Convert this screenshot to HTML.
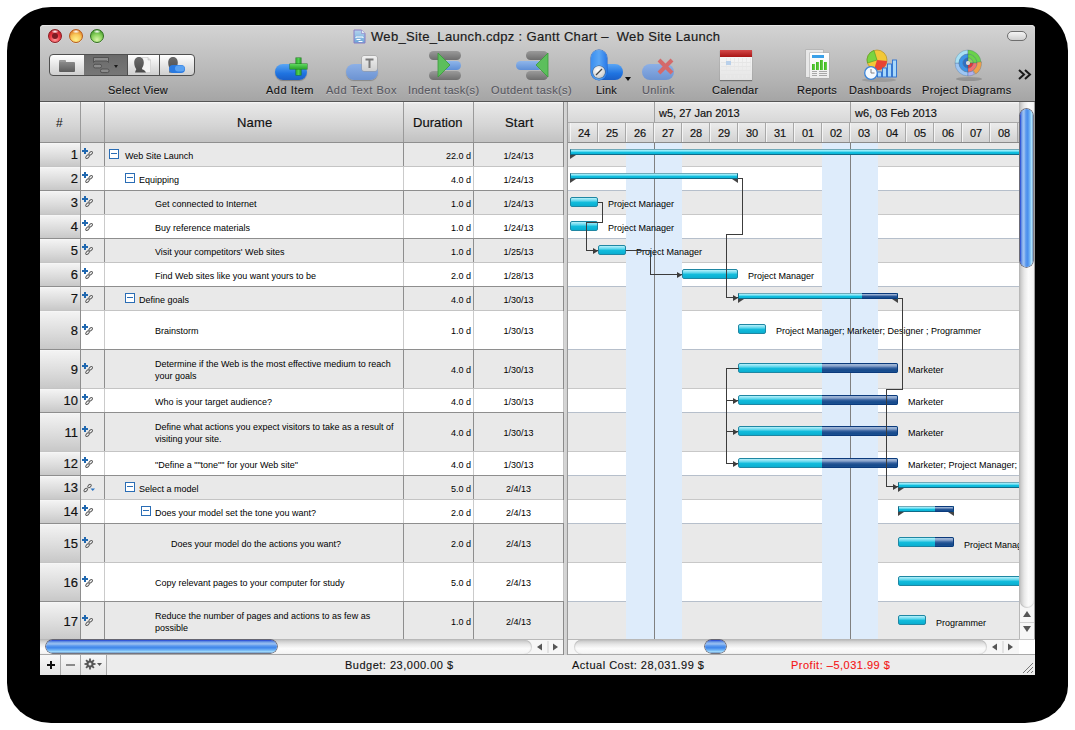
<!DOCTYPE html><html><head><meta charset="utf-8"><style>
*{box-sizing:border-box}
body{margin:0;width:1075px;height:730px;background:#fff;position:relative;overflow:hidden;font-family:"Liberation Sans",sans-serif;color:#000}
.a{position:absolute}
.t{position:absolute;white-space:pre;line-height:1}
.ui{font-size:11px;letter-spacing:0.5px;-webkit-text-stroke:0.12px}
.lg{-webkit-text-stroke:0.18px}
.tb{font-size:11px;color:#111;-webkit-text-stroke:0.1px;text-shadow:0 1px 0 rgba(255,255,255,0.35)}
.dis{color:#56565e}
.cell{font-size:9px;color:#000}
.hdr{background:linear-gradient(#f8f8f8 0px,#e8e8e8 2px,#d4d4d4 60%,#c2c2c2 100%);}
.rnum{background:linear-gradient(#f3f3f3,#dadada 60%,#c8c8c8)}
.bar{position:absolute;border:1px solid #1f87a3;border-radius:2px;background:linear-gradient(#b8f1fb 0%,#5fd6ec 35%,#12bcdc 55%,#0aaed0 100%)}
.dk{position:absolute;top:-1px;bottom:-1px;right:-1px;border:1px solid #0b3a7c;border-left:none;border-radius:0 2px 2px 0;background:linear-gradient(#a4bad8 0%,#8aa4cc 25%,#34609e 50%,#164a8c 75%,#1a4f90 100%)}
.sbar{position:absolute;border:1px solid #0f6a88;border-top-color:#6fa9b9;background:linear-gradient(#a4f0fc,#7fe4f6 30%,#10c0e0 55%,#0cb4d6)}
.ln{position:absolute;background:#3c3c3c}
.lbl{position:absolute;white-space:pre;font-size:9px;line-height:1;color:#000}
</style></head><body>
<div class="a" style="left:7px;top:7px;width:1061px;height:716px;background:#000;border-radius:44px 44px 43px 44px / 44px 44px 37px 40px"></div>
<div class="a" style="left:40px;top:25px;width:995px;height:650px;background:#ececec;border-radius:4px 4px 0 0;overflow:hidden">
</div>
<div class="a" style="left:40px;top:25px;width:995px;height:77px;border-radius:4px 4px 0 0;background:linear-gradient(#d3d3d3 0%,#c6c6c6 30%,#b2b2b2 75%,#a5a5a5 100%);border-top:1px solid #e6e6e6;border-bottom:1px solid #555"></div>
<div class="a" style="left:48px;top:29px;width:14px;height:14px;border-radius:50%;background:radial-gradient(circle 11.5px at 50% 80%,#ff9a9a 0%,#ec3a44 45%,#c0202a 80%,#8a1a20 100%);border:0.6px solid #8a1a20;box-shadow:0 0.5px 0.5px rgba(255,255,255,0.5)"></div>
<div class="a" style="left:52px;top:30px;width:6px;height:3px;border-radius:50%;background:radial-gradient(rgba(255,255,255,0.95),rgba(255,255,255,0))"></div>
<div class="a" style="left:52px;top:33px;width:6px;height:6px;border-radius:50%;background:#7e1c24"></div>
<div class="a" style="left:69px;top:29px;width:14px;height:14px;border-radius:50%;background:radial-gradient(circle 11.5px at 50% 80%,#fff08a 0%,#f8c85a 45%,#e0802a 80%,#b85a18 100%);border:0.6px solid #b85a18;box-shadow:0 0.5px 0.5px rgba(255,255,255,0.5)"></div>
<div class="a" style="left:73px;top:30px;width:6px;height:3px;border-radius:50%;background:radial-gradient(rgba(255,255,255,0.95),rgba(255,255,255,0))"></div>
<div class="a" style="left:90px;top:29px;width:14px;height:14px;border-radius:50%;background:radial-gradient(circle 11.5px at 50% 80%,#d8f6a8 0%,#8cd35e 45%,#4a9e30 80%,#2f6e1e 100%);border:0.6px solid #2f6e1e;box-shadow:0 0.5px 0.5px rgba(255,255,255,0.5)"></div>
<div class="a" style="left:94px;top:30px;width:6px;height:3px;border-radius:50%;background:radial-gradient(rgba(255,255,255,0.95),rgba(255,255,255,0))"></div>
<div class="a" style="left:1007px;top:31px;width:20px;height:10px;border-radius:5px;border:1px solid #6e6e6e;background:linear-gradient(#f4f4f4,#cfcfcf)"></div>
<svg class="a" style="left:352.5px;top:28.5px" width="13" height="15"><defs><linearGradient id="ti" x1="0" y1="0" x2="0" y2="1"><stop offset="0" stop-color="#b4d4ee"/><stop offset="1" stop-color="#6aa6d8"/></linearGradient></defs><path d="M1,1 L8.5,1 L12,4.5 L12,14 L1,14Z" fill="url(#ti)" stroke="#8a7cc4" stroke-width="1"/><path d="M8.5,1 L8.5,4.5 L12,4.5" fill="#e4eef6" stroke="#8a7cc4" stroke-width="0.6"/><path d="M3,9 L3,8 L10,8 L10,9" fill="none" stroke="#fff" stroke-width="1"/><rect x="3.5" y="10" width="4" height="1" fill="#fff"/><rect x="5.5" y="12" width="4" height="1" fill="#fff"/></svg>
<div class="t lg" style="left:371px;top:30px;font-size:13px;letter-spacing:0.33px;color:#1a1a1a">Web_Site_Launch.cdpz : Gantt Chart –  Web Site Launch</div>
<div class="a" style="left:49px;top:54px;width:146px;height:22px;border:1px solid #4f4f4f;border-radius:4px;background:linear-gradient(#ffffff,#e6e6e6 50%,#cfcfcf);overflow:hidden">
<div class="a" style="left:34px;top:0;width:43px;height:20px;background:linear-gradient(#6a6a6a,#777)"></div>
<div class="a" style="left:77px;top:0;width:1px;height:20px;background:#4f4f4f"></div>
<div class="a" style="left:109px;top:0;width:1px;height:20px;background:#4f4f4f"></div>
</div>
<div class="a" style="left:59px;top:60px;width:7px;height:3px;background:#9a9a9a;border-radius:1px 1px 0 0"></div>
<div class="a" style="left:59px;top:62px;width:16px;height:10px;background:linear-gradient(#8a8a8a,#5c5c5c);border-radius:1px"></div>
<svg class="a" style="left:92px;top:56px" width="20" height="18"><g fill="#8c8c8c" stroke="#4e4e4e" stroke-width="0.9"><path d="M1.5,1.5 H16.5 V6.5 L15,5 H3 L1.5,6.5 Z"/><rect x="1.5" y="8.3" width="8" height="3.6" rx="1.6"/><rect x="8.5" y="13" width="8.5" height="3.6" rx="1.6"/></g></svg>
<div class="a" style="left:114px;top:65px;width:0;height:0;border-left:2.5px solid transparent;border-right:2.5px solid transparent;border-top:3px solid #1a1a1a"></div>
<svg class="a" style="left:134px;top:57px" width="18" height="16"><defs><linearGradient id="bg1" x1="0" y1="0" x2="0" y2="1"><stop offset="0" stop-color="#6a6a6a"/><stop offset="1" stop-color="#4a4a4a"/></linearGradient></defs><path d="M8,0.5 L14,0.5 L16.5,3 L16.5,15.5 L8,15.5Z" fill="#f4f4f4" stroke="#c8c8c8" stroke-width="0.6"/><path d="M14,0.5 L14,3 L16.5,3" fill="#ddd" stroke="#bbb" stroke-width="0.5"/><path d="M5,0 C8.3,0 9.8,2.6 9.8,5.6 C9.8,8.2 9,10 8,11 L8,12.2 C10,12.8 11.5,14 12,15.5 L1,15.5 C1.3,14 1.8,13 2.3,12.2 C1,10.8 0.2,8.4 0.2,5.6 C0.2,2.6 1.7,0 5,0Z" fill="url(#bg1)"/></svg>
<svg class="a" style="left:168px;top:57px" width="18" height="17"><defs><linearGradient id="bg1" x1="0" y1="0" x2="0" y2="1"><stop offset="0" stop-color="#6a6a6a"/><stop offset="1" stop-color="#4a4a4a"/></linearGradient></defs><path d="M5,0 C8.3,0 9.8,2.6 9.8,5.6 C9.8,8.2 9,10 8,11 L8,12.2 C10,12.8 11.5,14 12,15.5 L1,15.5 C1.3,14 1.8,13 2.3,12.2 C1,10.8 0.2,8.4 0.2,5.6 C0.2,2.6 1.7,0 5,0Z" fill="url(#bg1)"/><rect x="1" y="8" width="16" height="8" rx="4" fill="#2a7ae0"/><rect x="7" y="8.5" width="9.5" height="6" rx="3" fill="#5aa2f2"/></svg>
<div class="t tb" style="left:108px;top:85px;letter-spacing:0.25px">Select View</div>
<div class="a" style="left:275px;top:64px;width:32px;height:16px;border-radius:8px;background:linear-gradient(#5aa6f5,#1f73e0 60%,#1a5fc8);box-shadow:0 1px 1px rgba(0,0,0,0.3)"></div>
<div class="a" style="left:296px;top:58px;width:5px;height:17px;background:linear-gradient(90deg,#2fa82f,#4fd04f,#2a9a2a);box-shadow:0 0 0 0.5px #1d7a1d"></div>
<div class="a" style="left:290px;top:64px;width:17px;height:5px;background:linear-gradient(#5fd85f,#2aa52a);box-shadow:0 0 0 0.5px #1d7a1d"></div>
<div class="t tb" style="left:266px;top:85px;letter-spacing:0.5px">Add Item</div>
<div class="a" style="left:346px;top:64px;width:32px;height:16px;border-radius:8px;background:linear-gradient(#8db0e6,#6c93d2);box-shadow:0 1px 1px rgba(0,0,0,0.25)"></div>
<div class="a" style="left:362px;top:56px;width:15px;height:15px;border-radius:2px;background:linear-gradient(#f0f0f0,#cfcfcf);box-shadow:0 0 0 0.5px #999"></div>
<svg class="a" style="left:362px;top:56px" width="15" height="15"><path d="M3.5,3.5 H11.5 M7.5,3.5 V12" stroke="#7a7a7a" stroke-width="2"/></svg>
<div class="t tb dis" style="left:326px;top:85px;letter-spacing:0.53px">Add Text Box</div>
<div class="a" style="left:429px;top:51px;width:32px;height:9px;border-radius:5px;background:linear-gradient(#9a9a9a,#6e6e6e)"></div>
<div class="a" style="left:429px;top:71px;width:32px;height:9px;border-radius:5px;background:linear-gradient(#9a9a9a,#6e6e6e)"></div>
<div class="a" style="left:440px;top:61px;width:21px;height:9px;border-radius:5px;background:linear-gradient(#8fb6ea,#5f8fd6)"></div>
<svg class="a" style="left:436px;top:52px" width="16" height="26"><polygon points="2,1 14,13 2,25" fill="#5cbf5c" stroke="#3a9a3a" stroke-width="0.8"/></svg>
<div class="t tb dis" style="left:408px;top:85px;letter-spacing:0.34px">Indent task(s)</div>
<div class="a" style="left:526px;top:51px;width:22px;height:9px;border-radius:5px;background:linear-gradient(#9a9a9a,#6e6e6e)"></div>
<div class="a" style="left:526px;top:71px;width:22px;height:9px;border-radius:5px;background:linear-gradient(#9a9a9a,#6e6e6e)"></div>
<div class="a" style="left:516px;top:61px;width:26px;height:9px;border-radius:5px;background:linear-gradient(#8fb6ea,#5f8fd6)"></div>
<svg class="a" style="left:534px;top:52px" width="16" height="26"><polygon points="14,1 2,13 14,25" fill="#5cbf5c" stroke="#3a9a3a" stroke-width="0.8"/></svg>
<div class="t tb dis" style="left:491px;top:85px;letter-spacing:0.39px">Outdent task(s)</div>
<div class="a" style="left:591px;top:64px;width:32px;height:16px;border-radius:8px;background:linear-gradient(#5aa6f5,#1f73e0 60%,#1a5fc8)"></div>
<div class="a" style="left:591px;top:50px;width:16px;height:30px;border-radius:8px;background:linear-gradient(90deg,#3a8ef0,#5aa6f5 50%,#2a7ae8);box-shadow:0 0 0 0.5px #1a5fc8"></div>
<div class="a" style="left:593px;top:66px;width:12px;height:12px;border-radius:50%;background:radial-gradient(circle at 40% 35%,#fff,#cfcfcf 70%,#888);box-shadow:0 0 0 0.5px #555"></div>
<svg class="a" style="left:593px;top:66px" width="12" height="12"><line x1="3" y1="9" x2="9" y2="3" stroke="#444" stroke-width="1.2"/></svg>
<div class="a" style="left:625px;top:77px;width:0;height:0;border-left:3px solid transparent;border-right:3px solid transparent;border-top:4px solid #111"></div>
<div class="t tb" style="left:596px;top:85px;letter-spacing:0.2px">Link</div>
<div class="a" style="left:642px;top:64px;width:32px;height:16px;border-radius:8px;background:linear-gradient(#8db0e6,#6c93d2)"></div>
<svg class="a" style="left:657px;top:58px" width="17" height="17"><path d="M2,2 L15,15 M15,2 L2,15" stroke="#d46a6a" stroke-width="4"/></svg>
<div class="t tb dis" style="left:642px;top:85px;letter-spacing:0.4px">Unlink</div>
<div class="a" style="left:720px;top:50px;width:32px;height:30px;background:linear-gradient(#fafafa,#e4e4e4);box-shadow:0 1px 1px rgba(0,0,0,0.35)"></div>
<div class="a" style="left:720px;top:50px;width:32px;height:7px;background:linear-gradient(#d44a4a,#a81414)"></div>
<div class="a" style="left:726px;top:58px;width:1px;height:21px;background:#e9e9e9"></div><div class="a" style="left:730px;top:58px;width:1px;height:21px;background:#e9e9e9"></div><div class="a" style="left:734px;top:58px;width:1px;height:21px;background:#e9e9e9"></div><div class="a" style="left:738px;top:58px;width:1px;height:21px;background:#e9e9e9"></div><div class="a" style="left:742px;top:58px;width:1px;height:21px;background:#e9e9e9"></div><div class="a" style="left:746px;top:58px;width:1px;height:21px;background:#e9e9e9"></div><div class="a" style="left:750px;top:58px;width:1px;height:21px;background:#e9e9e9"></div>
<div class="a" style="left:721px;top:62px;width:30px;height:1px;background:#e6e6e6"></div><div class="a" style="left:721px;top:66px;width:30px;height:1px;background:#e6e6e6"></div><div class="a" style="left:721px;top:70px;width:30px;height:1px;background:#e6e6e6"></div><div class="a" style="left:721px;top:74px;width:30px;height:1px;background:#e6e6e6"></div><div class="a" style="left:721px;top:78px;width:30px;height:1px;background:#e6e6e6"></div>
<div class="a" style="left:726px;top:61px;width:5px;height:4px;background:#b9d0ea"></div>
<div class="t tb" style="left:712px;top:85px;letter-spacing:0.2px">Calendar</div>
<div class="a" style="left:806px;top:50px;width:17px;height:27px;background:#e8e8e8;box-shadow:0 0 0 0.5px #aaa"></div>
<div class="a" style="left:810px;top:53px;width:19px;height:25px;background:linear-gradient(#fff,#ececec);box-shadow:0 0 0 0.5px #aaa"></div>
<div class="a" style="left:812px;top:55px;width:12px;height:3px;background:#3aa0e8"></div>
<div class="a" style="left:812px;top:64px;width:3px;height:6px;background:linear-gradient(90deg,#3cb01c,#6ad84a)"></div>
<div class="a" style="left:816px;top:62px;width:3px;height:8px;background:linear-gradient(90deg,#3cb01c,#6ad84a)"></div>
<div class="a" style="left:820px;top:60px;width:3px;height:10px;background:linear-gradient(90deg,#3cb01c,#6ad84a)"></div>
<div class="a" style="left:824px;top:62px;width:3px;height:8px;background:linear-gradient(90deg,#3cb01c,#6ad84a)"></div>
<div class="a" style="left:812px;top:71px;width:5px;height:1px;background:#a8a8a8"></div>
<div class="a" style="left:819px;top:71px;width:8px;height:1px;background:#a8a8a8"></div>
<div class="a" style="left:812px;top:73px;width:5px;height:1px;background:#a8a8a8"></div>
<div class="a" style="left:819px;top:73px;width:8px;height:1px;background:#a8a8a8"></div>
<div class="a" style="left:812px;top:75px;width:5px;height:1px;background:#a8a8a8"></div>
<div class="a" style="left:819px;top:75px;width:8px;height:1px;background:#a8a8a8"></div>
<div class="t tb" style="left:797px;top:85px;letter-spacing:0.2px">Reports</div>
<div class="a" style="left:862px;top:78px;width:34px;height:4px;border-radius:50%;background:rgba(0,0,0,0.13)"></div>
<svg class="a" style="left:860px;top:49px" width="40" height="32"><g transform="translate(17,11)"><circle r="10" fill="#f2c838" stroke="#b89020" stroke-width="0.7"/><path d="M0,0 L-9.5,3 A10,10 0 0 1 -3,-9.5 Z" fill="#7ad440" stroke="#4a9a2a" stroke-width="0.6"/><path d="M0,0 L10,1 A10,10 0 0 1 -3,9.6 Z" fill="#e84434"/></g><rect x="17.5" y="23" width="4" height="5" fill="#a8d8fa" stroke="#2a70d0" stroke-width="0.9"/><rect x="22.5" y="19" width="4" height="9" fill="#a8d8fa" stroke="#2a70d0" stroke-width="0.9"/><rect x="27.5" y="15" width="4" height="13" fill="#a8d8fa" stroke="#2a70d0" stroke-width="0.9"/><rect x="32.5" y="11" width="4" height="17" fill="#a8d8fa" stroke="#2a70d0" stroke-width="0.9"/><circle cx="11" cy="24" r="6.3" fill="#f4faff" stroke="#3a84d8" stroke-width="1.3"/><path d="M11,20 L11,24 L14.5,24" stroke="#777" fill="none" stroke-width="0.9"/></svg>
<div class="t tb" style="left:849px;top:85px;letter-spacing:0.32px">Dashboards</div>
<div class="a" style="left:956px;top:77px;width:26px;height:4px;border-radius:50%;background:rgba(0,0,0,0.18)"></div>
<svg class="a" style="left:953px;top:49px" width="32" height="30"><g transform="translate(15,14)"><path d="M0.00,13.00 A13,13 0 0 1 -13.00,0.00 L-9.00,0.00 A9,9 0 0 0 0.00,9.00Z" fill="#9ec6f4" stroke="rgba(60,90,120,0.55)" stroke-width="0.5"/><path d="M-13.00,0.00 A13,13 0 0 1 -0.00,-13.00 L-0.00,-9.00 A9,9 0 0 0 -9.00,0.00Z" fill="#a8e0f4" stroke="rgba(60,90,120,0.55)" stroke-width="0.5"/><path d="M6.50,11.26 A13,13 0 0 1 0.00,13.00 L0.00,9.00 A9,9 0 0 0 4.50,7.79Z" fill="#b0b0f0" stroke="rgba(60,90,120,0.55)" stroke-width="0.5"/><path d="M0.00,9.00 A9,9 0 0 1 -0.00,-9.00 L-0.00,-5.00 A5,5 0 0 0 0.00,5.00Z" fill="#3c94e8" stroke="rgba(60,90,120,0.55)" stroke-width="0.5"/><path d="M0.00,5.00 A5,5 0 0 1 -0.00,-5.00 L-0.00,-2.00 A2,2 0 0 0 0.00,2.00Z" fill="#2f6fc4" stroke="rgba(60,90,120,0.55)" stroke-width="0.5"/><path d="M-0.00,-9.00 A9,9 0 0 1 9.00,-0.00 L5.00,-0.00 A5,5 0 0 0 -0.00,-5.00Z" fill="#6ad24a" stroke="rgba(60,90,120,0.55)" stroke-width="0.5"/><path d="M-0.00,-13.00 A13,13 0 0 1 13.00,-0.00 L9.00,-0.00 A9,9 0 0 0 -0.00,-9.00Z" fill="#6ad24a" stroke="rgba(60,90,120,0.55)" stroke-width="0.5"/><path d="M9.00,0.00 A9,9 0 0 1 0.00,9.00 L0.00,5.00 A5,5 0 0 0 5.00,0.00Z" fill="#f07070" stroke="rgba(60,90,120,0.55)" stroke-width="0.5"/><path d="M-0.00,-5.00 A5,5 0 0 1 5.00,-0.00 L2.00,-0.00 A2,2 0 0 0 -0.00,-2.00Z" fill="#8ad060" stroke="rgba(60,90,120,0.55)" stroke-width="0.5"/><path d="M5.00,0.00 A5,5 0 0 1 0.00,5.00 L0.00,2.00 A2,2 0 0 0 2.00,0.00Z" fill="#e03838" stroke="rgba(60,90,120,0.55)" stroke-width="0.5"/><path d="M13.45,-1.18 A13.5,13.5 0 0 1 7.74,11.06 L5.16,7.37 A9,9 0 0 0 8.97,-0.78Z" fill="#f0a048" stroke="rgba(60,90,120,0.55)" stroke-width="0.5"/><circle r="2" fill="#d8d8d8"/></g></svg>
<div class="t tb" style="left:922px;top:85px;letter-spacing:0.32px">Project Diagrams</div>
<svg class="a" style="left:1018px;top:69px" width="14" height="11"><path d="M1,1 L6,5.5 L1,10 M7,1 L12,5.5 L7,10" fill="none" stroke="#1a1a1a" stroke-width="2"/></svg>
<div class="a hdr" style="left:40px;top:102px;width:523px;height:41px;border-bottom:1px solid #8a8a8a"></div>
<div class="a" style="left:80px;top:102px;width:1px;height:41px;background:#9a9a9a"></div>
<div class="a" style="left:104px;top:102px;width:1px;height:41px;background:#9a9a9a"></div>
<div class="a" style="left:403px;top:102px;width:1px;height:41px;background:#9a9a9a"></div>
<div class="a" style="left:473px;top:102px;width:1px;height:41px;background:#9a9a9a"></div>
<div class="t" style="left:56px;top:117px;font-size:12px;color:#111">#</div>
<div class="t lg" style="left:237px;top:116px;font-size:13px;letter-spacing:0.2px;color:#111">Name</div>
<div class="t lg" style="left:413px;top:116px;font-size:13px;letter-spacing:0.05px;color:#111">Duration</div>
<div class="t lg" style="left:505px;top:116px;font-size:13px;letter-spacing:0.2px;color:#111">Start</div>
<div class="a" style="left:81px;top:143px;width:482px;height:23px;background:#e9e9e9"></div>
<div class="a rnum" style="left:40px;top:143px;width:40px;height:23px;border-top:1px solid #f6f6f6"></div>
<div class="a" style="left:81px;top:167px;width:482px;height:23px;background:#ffffff"></div>
<div class="a rnum" style="left:40px;top:167px;width:40px;height:23px;border-top:1px solid #f6f6f6"></div>
<div class="a" style="left:81px;top:191px;width:482px;height:23px;background:#e9e9e9"></div>
<div class="a rnum" style="left:40px;top:191px;width:40px;height:23px;border-top:1px solid #f6f6f6"></div>
<div class="a" style="left:81px;top:215px;width:482px;height:23px;background:#ffffff"></div>
<div class="a rnum" style="left:40px;top:215px;width:40px;height:23px;border-top:1px solid #f6f6f6"></div>
<div class="a" style="left:81px;top:239px;width:482px;height:23px;background:#e9e9e9"></div>
<div class="a rnum" style="left:40px;top:239px;width:40px;height:23px;border-top:1px solid #f6f6f6"></div>
<div class="a" style="left:81px;top:263px;width:482px;height:23px;background:#ffffff"></div>
<div class="a rnum" style="left:40px;top:263px;width:40px;height:23px;border-top:1px solid #f6f6f6"></div>
<div class="a" style="left:81px;top:287px;width:482px;height:23px;background:#e9e9e9"></div>
<div class="a rnum" style="left:40px;top:287px;width:40px;height:23px;border-top:1px solid #f6f6f6"></div>
<div class="a" style="left:81px;top:311px;width:482px;height:38px;background:#ffffff"></div>
<div class="a rnum" style="left:40px;top:311px;width:40px;height:38px;border-top:1px solid #f6f6f6"></div>
<div class="a" style="left:81px;top:350px;width:482px;height:38px;background:#e9e9e9"></div>
<div class="a rnum" style="left:40px;top:350px;width:40px;height:38px;border-top:1px solid #f6f6f6"></div>
<div class="a" style="left:81px;top:389px;width:482px;height:23px;background:#ffffff"></div>
<div class="a rnum" style="left:40px;top:389px;width:40px;height:23px;border-top:1px solid #f6f6f6"></div>
<div class="a" style="left:81px;top:413px;width:482px;height:38px;background:#e9e9e9"></div>
<div class="a rnum" style="left:40px;top:413px;width:40px;height:38px;border-top:1px solid #f6f6f6"></div>
<div class="a" style="left:81px;top:452px;width:482px;height:23px;background:#ffffff"></div>
<div class="a rnum" style="left:40px;top:452px;width:40px;height:23px;border-top:1px solid #f6f6f6"></div>
<div class="a" style="left:81px;top:476px;width:482px;height:23px;background:#e9e9e9"></div>
<div class="a rnum" style="left:40px;top:476px;width:40px;height:23px;border-top:1px solid #f6f6f6"></div>
<div class="a" style="left:81px;top:500px;width:482px;height:23px;background:#ffffff"></div>
<div class="a rnum" style="left:40px;top:500px;width:40px;height:23px;border-top:1px solid #f6f6f6"></div>
<div class="a" style="left:81px;top:524px;width:482px;height:38px;background:#e9e9e9"></div>
<div class="a rnum" style="left:40px;top:524px;width:40px;height:38px;border-top:1px solid #f6f6f6"></div>
<div class="a" style="left:81px;top:563px;width:482px;height:38px;background:#ffffff"></div>
<div class="a rnum" style="left:40px;top:563px;width:40px;height:38px;border-top:1px solid #f6f6f6"></div>
<div class="a" style="left:81px;top:602px;width:482px;height:38px;background:#e9e9e9"></div>
<div class="a rnum" style="left:40px;top:602px;width:40px;height:38px;border-top:1px solid #f6f6f6"></div>
<div class="a" style="left:40px;top:166px;width:523px;height:1px;background:#c4c4c4"></div>
<div class="a" style="left:40px;top:190px;width:523px;height:1px;background:#8e8e8e"></div>
<div class="a" style="left:40px;top:214px;width:523px;height:1px;background:#c4c4c4"></div>
<div class="a" style="left:40px;top:238px;width:523px;height:1px;background:#8e8e8e"></div>
<div class="a" style="left:40px;top:262px;width:523px;height:1px;background:#c4c4c4"></div>
<div class="a" style="left:40px;top:286px;width:523px;height:1px;background:#8e8e8e"></div>
<div class="a" style="left:40px;top:310px;width:523px;height:1px;background:#c4c4c4"></div>
<div class="a" style="left:40px;top:349px;width:523px;height:1px;background:#8e8e8e"></div>
<div class="a" style="left:40px;top:388px;width:523px;height:1px;background:#c4c4c4"></div>
<div class="a" style="left:40px;top:412px;width:523px;height:1px;background:#8e8e8e"></div>
<div class="a" style="left:40px;top:451px;width:523px;height:1px;background:#c4c4c4"></div>
<div class="a" style="left:40px;top:475px;width:523px;height:1px;background:#8e8e8e"></div>
<div class="a" style="left:40px;top:499px;width:523px;height:1px;background:#c4c4c4"></div>
<div class="a" style="left:40px;top:523px;width:523px;height:1px;background:#8e8e8e"></div>
<div class="a" style="left:40px;top:562px;width:523px;height:1px;background:#c4c4c4"></div>
<div class="a" style="left:40px;top:601px;width:523px;height:1px;background:#8e8e8e"></div>
<div class="a" style="left:40px;top:640px;width:523px;height:1px;background:#c4c4c4"></div>
<div class="a" style="left:40px;top:142px;width:523px;height:1px;background:#8f8f8f"></div>
<div class="a" style="left:80px;top:143px;width:1px;height:496px;background:#8e8e8e"></div>
<div class="a" style="left:104px;top:143px;width:1px;height:23px;background:#8e8e8e"></div>
<div class="a" style="left:403px;top:143px;width:1px;height:23px;background:#8e8e8e"></div>
<div class="a" style="left:473px;top:143px;width:1px;height:23px;background:#8e8e8e"></div>
<div class="a" style="left:104px;top:167px;width:1px;height:23px;background:#cbcbcb"></div>
<div class="a" style="left:403px;top:167px;width:1px;height:23px;background:#cbcbcb"></div>
<div class="a" style="left:473px;top:167px;width:1px;height:23px;background:#cbcbcb"></div>
<div class="a" style="left:104px;top:191px;width:1px;height:23px;background:#8e8e8e"></div>
<div class="a" style="left:403px;top:191px;width:1px;height:23px;background:#8e8e8e"></div>
<div class="a" style="left:473px;top:191px;width:1px;height:23px;background:#8e8e8e"></div>
<div class="a" style="left:104px;top:215px;width:1px;height:23px;background:#cbcbcb"></div>
<div class="a" style="left:403px;top:215px;width:1px;height:23px;background:#cbcbcb"></div>
<div class="a" style="left:473px;top:215px;width:1px;height:23px;background:#cbcbcb"></div>
<div class="a" style="left:104px;top:239px;width:1px;height:23px;background:#8e8e8e"></div>
<div class="a" style="left:403px;top:239px;width:1px;height:23px;background:#8e8e8e"></div>
<div class="a" style="left:473px;top:239px;width:1px;height:23px;background:#8e8e8e"></div>
<div class="a" style="left:104px;top:263px;width:1px;height:23px;background:#cbcbcb"></div>
<div class="a" style="left:403px;top:263px;width:1px;height:23px;background:#cbcbcb"></div>
<div class="a" style="left:473px;top:263px;width:1px;height:23px;background:#cbcbcb"></div>
<div class="a" style="left:104px;top:287px;width:1px;height:23px;background:#8e8e8e"></div>
<div class="a" style="left:403px;top:287px;width:1px;height:23px;background:#8e8e8e"></div>
<div class="a" style="left:473px;top:287px;width:1px;height:23px;background:#8e8e8e"></div>
<div class="a" style="left:104px;top:311px;width:1px;height:38px;background:#cbcbcb"></div>
<div class="a" style="left:403px;top:311px;width:1px;height:38px;background:#cbcbcb"></div>
<div class="a" style="left:473px;top:311px;width:1px;height:38px;background:#cbcbcb"></div>
<div class="a" style="left:104px;top:350px;width:1px;height:38px;background:#8e8e8e"></div>
<div class="a" style="left:403px;top:350px;width:1px;height:38px;background:#8e8e8e"></div>
<div class="a" style="left:473px;top:350px;width:1px;height:38px;background:#8e8e8e"></div>
<div class="a" style="left:104px;top:389px;width:1px;height:23px;background:#cbcbcb"></div>
<div class="a" style="left:403px;top:389px;width:1px;height:23px;background:#cbcbcb"></div>
<div class="a" style="left:473px;top:389px;width:1px;height:23px;background:#cbcbcb"></div>
<div class="a" style="left:104px;top:413px;width:1px;height:38px;background:#8e8e8e"></div>
<div class="a" style="left:403px;top:413px;width:1px;height:38px;background:#8e8e8e"></div>
<div class="a" style="left:473px;top:413px;width:1px;height:38px;background:#8e8e8e"></div>
<div class="a" style="left:104px;top:452px;width:1px;height:23px;background:#cbcbcb"></div>
<div class="a" style="left:403px;top:452px;width:1px;height:23px;background:#cbcbcb"></div>
<div class="a" style="left:473px;top:452px;width:1px;height:23px;background:#cbcbcb"></div>
<div class="a" style="left:104px;top:476px;width:1px;height:23px;background:#8e8e8e"></div>
<div class="a" style="left:403px;top:476px;width:1px;height:23px;background:#8e8e8e"></div>
<div class="a" style="left:473px;top:476px;width:1px;height:23px;background:#8e8e8e"></div>
<div class="a" style="left:104px;top:500px;width:1px;height:23px;background:#cbcbcb"></div>
<div class="a" style="left:403px;top:500px;width:1px;height:23px;background:#cbcbcb"></div>
<div class="a" style="left:473px;top:500px;width:1px;height:23px;background:#cbcbcb"></div>
<div class="a" style="left:104px;top:524px;width:1px;height:38px;background:#8e8e8e"></div>
<div class="a" style="left:403px;top:524px;width:1px;height:38px;background:#8e8e8e"></div>
<div class="a" style="left:473px;top:524px;width:1px;height:38px;background:#8e8e8e"></div>
<div class="a" style="left:104px;top:563px;width:1px;height:38px;background:#cbcbcb"></div>
<div class="a" style="left:403px;top:563px;width:1px;height:38px;background:#cbcbcb"></div>
<div class="a" style="left:473px;top:563px;width:1px;height:38px;background:#cbcbcb"></div>
<div class="a" style="left:104px;top:602px;width:1px;height:38px;background:#8e8e8e"></div>
<div class="a" style="left:403px;top:602px;width:1px;height:38px;background:#8e8e8e"></div>
<div class="a" style="left:473px;top:602px;width:1px;height:38px;background:#8e8e8e"></div>
<div class="t lg" style="left:40px;width:38px;text-align:right;top:148px;font-size:13px;color:#111">1</div>
<svg class="a" style="left:82px;top:147px" width="16" height="14"><path d="M3,1 V7 M0,4 H6" stroke="#2068b0" stroke-width="2"/><g fill="#f4f4f4" stroke="#5c5c5c" stroke-width="1"><ellipse cx="8.7" cy="6.3" rx="2.2" ry="1.3" transform="rotate(-45 8.7 6.3)"/><ellipse cx="5.5" cy="9.7" rx="2.2" ry="1.3" transform="rotate(-45 5.5 9.7)"/></g></svg>
<div class="a" style="left:109px;top:149px;width:10px;height:10px;border:1px solid #2a6db5;background:#fff"></div>
<div class="a" style="left:111px;top:153px;width:6px;height:1px;background:#2a6db5"></div>
<div class="t cell" style="left:125px;top:150px;line-height:12px">Web Site Launch</div>
<div class="t cell" style="left:404px;width:67px;text-align:right;top:152px">22.0 d</div>
<div class="t cell" style="left:474px;width:89px;text-align:center;top:152px">1/24/13</div>
<div class="t lg" style="left:40px;width:38px;text-align:right;top:172px;font-size:13px;color:#111">2</div>
<svg class="a" style="left:82px;top:171px" width="16" height="14"><path d="M3,1 V7 M0,4 H6" stroke="#2068b0" stroke-width="2"/><g fill="#f4f4f4" stroke="#5c5c5c" stroke-width="1"><ellipse cx="8.7" cy="6.3" rx="2.2" ry="1.3" transform="rotate(-45 8.7 6.3)"/><ellipse cx="5.5" cy="9.7" rx="2.2" ry="1.3" transform="rotate(-45 5.5 9.7)"/></g></svg>
<div class="a" style="left:125px;top:173px;width:10px;height:10px;border:1px solid #2a6db5;background:#fff"></div>
<div class="a" style="left:127px;top:177px;width:6px;height:1px;background:#2a6db5"></div>
<div class="t cell" style="left:139px;top:174px;line-height:12px">Equipping</div>
<div class="t cell" style="left:404px;width:67px;text-align:right;top:176px">4.0 d</div>
<div class="t cell" style="left:474px;width:89px;text-align:center;top:176px">1/24/13</div>
<div class="t lg" style="left:40px;width:38px;text-align:right;top:196px;font-size:13px;color:#111">3</div>
<svg class="a" style="left:82px;top:195px" width="16" height="14"><path d="M3,1 V7 M0,4 H6" stroke="#2068b0" stroke-width="2"/><g fill="#f4f4f4" stroke="#5c5c5c" stroke-width="1"><ellipse cx="8.7" cy="6.3" rx="2.2" ry="1.3" transform="rotate(-45 8.7 6.3)"/><ellipse cx="5.5" cy="9.7" rx="2.2" ry="1.3" transform="rotate(-45 5.5 9.7)"/></g></svg>
<div class="t cell" style="left:155px;top:198px;line-height:12px">Get connected to Internet</div>
<div class="t cell" style="left:404px;width:67px;text-align:right;top:200px">1.0 d</div>
<div class="t cell" style="left:474px;width:89px;text-align:center;top:200px">1/24/13</div>
<div class="t lg" style="left:40px;width:38px;text-align:right;top:220px;font-size:13px;color:#111">4</div>
<svg class="a" style="left:82px;top:219px" width="16" height="14"><path d="M3,1 V7 M0,4 H6" stroke="#2068b0" stroke-width="2"/><g fill="#f4f4f4" stroke="#5c5c5c" stroke-width="1"><ellipse cx="8.7" cy="6.3" rx="2.2" ry="1.3" transform="rotate(-45 8.7 6.3)"/><ellipse cx="5.5" cy="9.7" rx="2.2" ry="1.3" transform="rotate(-45 5.5 9.7)"/></g></svg>
<div class="t cell" style="left:155px;top:222px;line-height:12px">Buy reference materials</div>
<div class="t cell" style="left:404px;width:67px;text-align:right;top:224px">1.0 d</div>
<div class="t cell" style="left:474px;width:89px;text-align:center;top:224px">1/24/13</div>
<div class="t lg" style="left:40px;width:38px;text-align:right;top:244px;font-size:13px;color:#111">5</div>
<svg class="a" style="left:82px;top:243px" width="16" height="14"><path d="M3,1 V7 M0,4 H6" stroke="#2068b0" stroke-width="2"/><g fill="#f4f4f4" stroke="#5c5c5c" stroke-width="1"><ellipse cx="8.7" cy="6.3" rx="2.2" ry="1.3" transform="rotate(-45 8.7 6.3)"/><ellipse cx="5.5" cy="9.7" rx="2.2" ry="1.3" transform="rotate(-45 5.5 9.7)"/></g></svg>
<div class="t cell" style="left:155px;top:246px;line-height:12px">Visit your competitors' Web sites</div>
<div class="t cell" style="left:404px;width:67px;text-align:right;top:248px">1.0 d</div>
<div class="t cell" style="left:474px;width:89px;text-align:center;top:248px">1/25/13</div>
<div class="t lg" style="left:40px;width:38px;text-align:right;top:268px;font-size:13px;color:#111">6</div>
<svg class="a" style="left:82px;top:267px" width="16" height="14"><path d="M3,1 V7 M0,4 H6" stroke="#2068b0" stroke-width="2"/><g fill="#f4f4f4" stroke="#5c5c5c" stroke-width="1"><ellipse cx="8.7" cy="6.3" rx="2.2" ry="1.3" transform="rotate(-45 8.7 6.3)"/><ellipse cx="5.5" cy="9.7" rx="2.2" ry="1.3" transform="rotate(-45 5.5 9.7)"/></g></svg>
<div class="t cell" style="left:155px;top:270px;line-height:12px">Find Web sites like you want yours to be</div>
<div class="t cell" style="left:404px;width:67px;text-align:right;top:272px">2.0 d</div>
<div class="t cell" style="left:474px;width:89px;text-align:center;top:272px">1/28/13</div>
<div class="t lg" style="left:40px;width:38px;text-align:right;top:292px;font-size:13px;color:#111">7</div>
<svg class="a" style="left:82px;top:291px" width="16" height="14"><path d="M3,1 V7 M0,4 H6" stroke="#2068b0" stroke-width="2"/><g fill="#f4f4f4" stroke="#5c5c5c" stroke-width="1"><ellipse cx="8.7" cy="6.3" rx="2.2" ry="1.3" transform="rotate(-45 8.7 6.3)"/><ellipse cx="5.5" cy="9.7" rx="2.2" ry="1.3" transform="rotate(-45 5.5 9.7)"/></g></svg>
<div class="a" style="left:125px;top:293px;width:10px;height:10px;border:1px solid #2a6db5;background:#fff"></div>
<div class="a" style="left:127px;top:297px;width:6px;height:1px;background:#2a6db5"></div>
<div class="t cell" style="left:139px;top:294px;line-height:12px">Define goals</div>
<div class="t cell" style="left:404px;width:67px;text-align:right;top:296px">4.0 d</div>
<div class="t cell" style="left:474px;width:89px;text-align:center;top:296px">1/30/13</div>
<div class="t lg" style="left:40px;width:38px;text-align:right;top:324px;font-size:13px;color:#111">8</div>
<svg class="a" style="left:82px;top:323px" width="16" height="14"><path d="M3,1 V7 M0,4 H6" stroke="#2068b0" stroke-width="2"/><g fill="#f4f4f4" stroke="#5c5c5c" stroke-width="1"><ellipse cx="8.7" cy="6.3" rx="2.2" ry="1.3" transform="rotate(-45 8.7 6.3)"/><ellipse cx="5.5" cy="9.7" rx="2.2" ry="1.3" transform="rotate(-45 5.5 9.7)"/></g></svg>
<div class="t cell" style="left:155px;top:325px;line-height:12px">Brainstorm</div>
<div class="t cell" style="left:404px;width:67px;text-align:right;top:327px">1.0 d</div>
<div class="t cell" style="left:474px;width:89px;text-align:center;top:327px">1/30/13</div>
<div class="t lg" style="left:40px;width:38px;text-align:right;top:363px;font-size:13px;color:#111">9</div>
<svg class="a" style="left:82px;top:362px" width="16" height="14"><path d="M3,1 V7 M0,4 H6" stroke="#2068b0" stroke-width="2"/><g fill="#f4f4f4" stroke="#5c5c5c" stroke-width="1"><ellipse cx="8.7" cy="6.3" rx="2.2" ry="1.3" transform="rotate(-45 8.7 6.3)"/><ellipse cx="5.5" cy="9.7" rx="2.2" ry="1.3" transform="rotate(-45 5.5 9.7)"/></g></svg>
<div class="t cell" style="left:155px;top:358px;line-height:12px">Determine if the Web is the most effective medium to reach<br>your goals</div>
<div class="t cell" style="left:404px;width:67px;text-align:right;top:366px">4.0 d</div>
<div class="t cell" style="left:474px;width:89px;text-align:center;top:366px">1/30/13</div>
<div class="t lg" style="left:40px;width:38px;text-align:right;top:394px;font-size:13px;color:#111">10</div>
<svg class="a" style="left:82px;top:393px" width="16" height="14"><path d="M3,1 V7 M0,4 H6" stroke="#2068b0" stroke-width="2"/><g fill="#f4f4f4" stroke="#5c5c5c" stroke-width="1"><ellipse cx="8.7" cy="6.3" rx="2.2" ry="1.3" transform="rotate(-45 8.7 6.3)"/><ellipse cx="5.5" cy="9.7" rx="2.2" ry="1.3" transform="rotate(-45 5.5 9.7)"/></g></svg>
<div class="t cell" style="left:155px;top:396px;line-height:12px">Who is your target audience?</div>
<div class="t cell" style="left:404px;width:67px;text-align:right;top:398px">4.0 d</div>
<div class="t cell" style="left:474px;width:89px;text-align:center;top:398px">1/30/13</div>
<div class="t lg" style="left:40px;width:38px;text-align:right;top:426px;font-size:13px;color:#111">11</div>
<svg class="a" style="left:82px;top:425px" width="16" height="14"><path d="M3,1 V7 M0,4 H6" stroke="#2068b0" stroke-width="2"/><g fill="#f4f4f4" stroke="#5c5c5c" stroke-width="1"><ellipse cx="8.7" cy="6.3" rx="2.2" ry="1.3" transform="rotate(-45 8.7 6.3)"/><ellipse cx="5.5" cy="9.7" rx="2.2" ry="1.3" transform="rotate(-45 5.5 9.7)"/></g></svg>
<div class="t cell" style="left:155px;top:421px;line-height:12px">Define what actions you expect visitors to take as a result of<br>visiting your site.</div>
<div class="t cell" style="left:404px;width:67px;text-align:right;top:429px">4.0 d</div>
<div class="t cell" style="left:474px;width:89px;text-align:center;top:429px">1/30/13</div>
<div class="t lg" style="left:40px;width:38px;text-align:right;top:457px;font-size:13px;color:#111">12</div>
<svg class="a" style="left:82px;top:456px" width="16" height="14"><path d="M3,1 V7 M0,4 H6" stroke="#2068b0" stroke-width="2"/><g fill="#f4f4f4" stroke="#5c5c5c" stroke-width="1"><ellipse cx="8.7" cy="6.3" rx="2.2" ry="1.3" transform="rotate(-45 8.7 6.3)"/><ellipse cx="5.5" cy="9.7" rx="2.2" ry="1.3" transform="rotate(-45 5.5 9.7)"/></g></svg>
<div class="t cell" style="left:155px;top:459px;line-height:12px">"Define a ""tone"" for your Web site"</div>
<div class="t cell" style="left:404px;width:67px;text-align:right;top:461px">4.0 d</div>
<div class="t cell" style="left:474px;width:89px;text-align:center;top:461px">1/30/13</div>
<div class="t lg" style="left:40px;width:38px;text-align:right;top:481px;font-size:13px;color:#111">13</div>
<svg class="a" style="left:82px;top:480px" width="16" height="14"><g fill="#f4f4f4" stroke="#5c5c5c" stroke-width="1"><ellipse cx="7.5" cy="6" rx="2.1" ry="1.3" transform="rotate(-45 7.5 6)"/><ellipse cx="3.7" cy="10" rx="2.1" ry="1.3" transform="rotate(-45 3.7 10)"/></g><polygon points="8.5,8.5 13,8.5 10.75,11" fill="#2a72c0"/></svg>
<div class="a" style="left:125px;top:482px;width:10px;height:10px;border:1px solid #2a6db5;background:#fff"></div>
<div class="a" style="left:127px;top:486px;width:6px;height:1px;background:#2a6db5"></div>
<div class="t cell" style="left:139px;top:483px;line-height:12px">Select a model</div>
<div class="t cell" style="left:404px;width:67px;text-align:right;top:485px">5.0 d</div>
<div class="t cell" style="left:474px;width:89px;text-align:center;top:485px">2/4/13</div>
<div class="t lg" style="left:40px;width:38px;text-align:right;top:505px;font-size:13px;color:#111">14</div>
<svg class="a" style="left:82px;top:504px" width="16" height="14"><path d="M3,1 V7 M0,4 H6" stroke="#2068b0" stroke-width="2"/><g fill="#f4f4f4" stroke="#5c5c5c" stroke-width="1"><ellipse cx="8.7" cy="6.3" rx="2.2" ry="1.3" transform="rotate(-45 8.7 6.3)"/><ellipse cx="5.5" cy="9.7" rx="2.2" ry="1.3" transform="rotate(-45 5.5 9.7)"/></g></svg>
<div class="a" style="left:141px;top:506px;width:10px;height:10px;border:1px solid #2a6db5;background:#fff"></div>
<div class="a" style="left:143px;top:510px;width:6px;height:1px;background:#2a6db5"></div>
<div class="t cell" style="left:155px;top:507px;line-height:12px">Does your model set the tone you want?</div>
<div class="t cell" style="left:404px;width:67px;text-align:right;top:509px">2.0 d</div>
<div class="t cell" style="left:474px;width:89px;text-align:center;top:509px">2/4/13</div>
<div class="t lg" style="left:40px;width:38px;text-align:right;top:537px;font-size:13px;color:#111">15</div>
<svg class="a" style="left:82px;top:536px" width="16" height="14"><path d="M3,1 V7 M0,4 H6" stroke="#2068b0" stroke-width="2"/><g fill="#f4f4f4" stroke="#5c5c5c" stroke-width="1"><ellipse cx="8.7" cy="6.3" rx="2.2" ry="1.3" transform="rotate(-45 8.7 6.3)"/><ellipse cx="5.5" cy="9.7" rx="2.2" ry="1.3" transform="rotate(-45 5.5 9.7)"/></g></svg>
<div class="t cell" style="left:171px;top:538px;line-height:12px">Does your model do the actions you want?</div>
<div class="t cell" style="left:404px;width:67px;text-align:right;top:540px">2.0 d</div>
<div class="t cell" style="left:474px;width:89px;text-align:center;top:540px">2/4/13</div>
<div class="t lg" style="left:40px;width:38px;text-align:right;top:576px;font-size:13px;color:#111">16</div>
<svg class="a" style="left:82px;top:575px" width="16" height="14"><path d="M3,1 V7 M0,4 H6" stroke="#2068b0" stroke-width="2"/><g fill="#f4f4f4" stroke="#5c5c5c" stroke-width="1"><ellipse cx="8.7" cy="6.3" rx="2.2" ry="1.3" transform="rotate(-45 8.7 6.3)"/><ellipse cx="5.5" cy="9.7" rx="2.2" ry="1.3" transform="rotate(-45 5.5 9.7)"/></g></svg>
<div class="t cell" style="left:155px;top:577px;line-height:12px">Copy relevant pages to your computer for study</div>
<div class="t cell" style="left:404px;width:67px;text-align:right;top:579px">5.0 d</div>
<div class="t cell" style="left:474px;width:89px;text-align:center;top:579px">2/4/13</div>
<div class="t lg" style="left:40px;width:38px;text-align:right;top:615px;font-size:13px;color:#111">17</div>
<svg class="a" style="left:82px;top:614px" width="16" height="14"><path d="M3,1 V7 M0,4 H6" stroke="#2068b0" stroke-width="2"/><g fill="#f4f4f4" stroke="#5c5c5c" stroke-width="1"><ellipse cx="8.7" cy="6.3" rx="2.2" ry="1.3" transform="rotate(-45 8.7 6.3)"/><ellipse cx="5.5" cy="9.7" rx="2.2" ry="1.3" transform="rotate(-45 5.5 9.7)"/></g></svg>
<div class="t cell" style="left:155px;top:610px;line-height:12px">Reduce the number of pages and actions to as few as<br>possible</div>
<div class="t cell" style="left:404px;width:67px;text-align:right;top:618px">1.0 d</div>
<div class="t cell" style="left:474px;width:89px;text-align:center;top:618px">2/4/13</div>
<div class="a" style="left:563px;top:102px;width:5px;height:553px;background:linear-gradient(90deg,#8a8a8a 0,#8a8a8a 1px,#d8d8d8 1px,#cfcfcf 4px,#9a9a9a 4px)"></div>
<div class="a" style="left:563px;top:167px;width:1px;height:23px;background:#c4c4c4"></div>
<div class="a" style="left:563px;top:215px;width:1px;height:23px;background:#c4c4c4"></div>
<div class="a" style="left:563px;top:263px;width:1px;height:23px;background:#c4c4c4"></div>
<div class="a" style="left:563px;top:311px;width:1px;height:38px;background:#c4c4c4"></div>
<div class="a" style="left:563px;top:389px;width:1px;height:23px;background:#c4c4c4"></div>
<div class="a" style="left:563px;top:452px;width:1px;height:23px;background:#c4c4c4"></div>
<div class="a" style="left:563px;top:500px;width:1px;height:23px;background:#c4c4c4"></div>
<div class="a" style="left:563px;top:563px;width:1px;height:38px;background:#c4c4c4"></div>
<div class="a hdr" style="left:568px;top:102px;width:451px;height:41px;border-bottom:1px solid #8a8a8a"></div>
<div class="a" style="left:568px;top:122px;width:451px;height:1px;background:#a8a8a8"></div>
<div class="a" style="left:654px;top:102px;width:1px;height:20px;background:#a0a0a0"></div>
<div class="a" style="left:850px;top:102px;width:1px;height:20px;background:#a0a0a0"></div>
<div class="t lg" style="left:659px;top:108px;font-size:11px;color:#111">w5, 27 Jan 2013</div>
<div class="t lg" style="left:855px;top:108px;font-size:11px;color:#111">w6, 03 Feb 2013</div>
<div class="a" style="left:570px;top:123px;width:28px;height:19px;border-left:1px solid #f4f4f4;border-right:1px solid #a8a8a8;background:linear-gradient(#ececec,#d2d2d2)"></div>
<div class="t lg" style="left:570px;width:28px;text-align:center;top:128px;font-size:11px;color:#111">24</div>
<div class="a" style="left:598px;top:123px;width:28px;height:19px;border-left:1px solid #f4f4f4;border-right:1px solid #a8a8a8;background:linear-gradient(#ececec,#d2d2d2)"></div>
<div class="t lg" style="left:598px;width:28px;text-align:center;top:128px;font-size:11px;color:#111">25</div>
<div class="a" style="left:626px;top:123px;width:28px;height:19px;border-left:1px solid #f4f4f4;border-right:1px solid #a8a8a8;background:linear-gradient(#ececec,#d2d2d2)"></div>
<div class="t lg" style="left:626px;width:28px;text-align:center;top:128px;font-size:11px;color:#111">26</div>
<div class="a" style="left:654px;top:123px;width:28px;height:19px;border-left:1px solid #f4f4f4;border-right:1px solid #a8a8a8;background:linear-gradient(#ececec,#d2d2d2)"></div>
<div class="t lg" style="left:654px;width:28px;text-align:center;top:128px;font-size:11px;color:#111">27</div>
<div class="a" style="left:682px;top:123px;width:28px;height:19px;border-left:1px solid #f4f4f4;border-right:1px solid #a8a8a8;background:linear-gradient(#ececec,#d2d2d2)"></div>
<div class="t lg" style="left:682px;width:28px;text-align:center;top:128px;font-size:11px;color:#111">28</div>
<div class="a" style="left:710px;top:123px;width:28px;height:19px;border-left:1px solid #f4f4f4;border-right:1px solid #a8a8a8;background:linear-gradient(#ececec,#d2d2d2)"></div>
<div class="t lg" style="left:710px;width:28px;text-align:center;top:128px;font-size:11px;color:#111">29</div>
<div class="a" style="left:738px;top:123px;width:28px;height:19px;border-left:1px solid #f4f4f4;border-right:1px solid #a8a8a8;background:linear-gradient(#ececec,#d2d2d2)"></div>
<div class="t lg" style="left:738px;width:28px;text-align:center;top:128px;font-size:11px;color:#111">30</div>
<div class="a" style="left:766px;top:123px;width:28px;height:19px;border-left:1px solid #f4f4f4;border-right:1px solid #a8a8a8;background:linear-gradient(#ececec,#d2d2d2)"></div>
<div class="t lg" style="left:766px;width:28px;text-align:center;top:128px;font-size:11px;color:#111">31</div>
<div class="a" style="left:794px;top:123px;width:28px;height:19px;border-left:1px solid #f4f4f4;border-right:1px solid #a8a8a8;background:linear-gradient(#ececec,#d2d2d2)"></div>
<div class="t lg" style="left:794px;width:28px;text-align:center;top:128px;font-size:11px;color:#111">01</div>
<div class="a" style="left:822px;top:123px;width:28px;height:19px;border-left:1px solid #f4f4f4;border-right:1px solid #a8a8a8;background:linear-gradient(#ececec,#d2d2d2)"></div>
<div class="t lg" style="left:822px;width:28px;text-align:center;top:128px;font-size:11px;color:#111">02</div>
<div class="a" style="left:850px;top:123px;width:28px;height:19px;border-left:1px solid #f4f4f4;border-right:1px solid #a8a8a8;background:linear-gradient(#ececec,#d2d2d2)"></div>
<div class="t lg" style="left:850px;width:28px;text-align:center;top:128px;font-size:11px;color:#111">03</div>
<div class="a" style="left:878px;top:123px;width:28px;height:19px;border-left:1px solid #f4f4f4;border-right:1px solid #a8a8a8;background:linear-gradient(#ececec,#d2d2d2)"></div>
<div class="t lg" style="left:878px;width:28px;text-align:center;top:128px;font-size:11px;color:#111">04</div>
<div class="a" style="left:906px;top:123px;width:28px;height:19px;border-left:1px solid #f4f4f4;border-right:1px solid #a8a8a8;background:linear-gradient(#ececec,#d2d2d2)"></div>
<div class="t lg" style="left:906px;width:28px;text-align:center;top:128px;font-size:11px;color:#111">05</div>
<div class="a" style="left:934px;top:123px;width:28px;height:19px;border-left:1px solid #f4f4f4;border-right:1px solid #a8a8a8;background:linear-gradient(#ececec,#d2d2d2)"></div>
<div class="t lg" style="left:934px;width:28px;text-align:center;top:128px;font-size:11px;color:#111">06</div>
<div class="a" style="left:962px;top:123px;width:28px;height:19px;border-left:1px solid #f4f4f4;border-right:1px solid #a8a8a8;background:linear-gradient(#ececec,#d2d2d2)"></div>
<div class="t lg" style="left:962px;width:28px;text-align:center;top:128px;font-size:11px;color:#111">07</div>
<div class="a" style="left:990px;top:123px;width:28px;height:19px;border-left:1px solid #f4f4f4;border-right:1px solid #a8a8a8;background:linear-gradient(#ececec,#d2d2d2)"></div>
<div class="t lg" style="left:990px;width:28px;text-align:center;top:128px;font-size:11px;color:#111">08</div>
<div class="a" style="left:568px;top:143px;width:451px;height:23px;background:#e9e9e9"></div>
<div class="a" style="left:568px;top:166px;width:451px;height:1px;background:#c8c8c8"></div>
<div class="a" style="left:568px;top:167px;width:451px;height:23px;background:#ffffff"></div>
<div class="a" style="left:568px;top:190px;width:451px;height:1px;background:#b6bfcb"></div>
<div class="a" style="left:568px;top:191px;width:451px;height:23px;background:#e9e9e9"></div>
<div class="a" style="left:568px;top:214px;width:451px;height:1px;background:#c8c8c8"></div>
<div class="a" style="left:568px;top:215px;width:451px;height:23px;background:#ffffff"></div>
<div class="a" style="left:568px;top:238px;width:451px;height:1px;background:#b6bfcb"></div>
<div class="a" style="left:568px;top:239px;width:451px;height:23px;background:#e9e9e9"></div>
<div class="a" style="left:568px;top:262px;width:451px;height:1px;background:#c8c8c8"></div>
<div class="a" style="left:568px;top:263px;width:451px;height:23px;background:#ffffff"></div>
<div class="a" style="left:568px;top:286px;width:451px;height:1px;background:#b6bfcb"></div>
<div class="a" style="left:568px;top:287px;width:451px;height:23px;background:#e9e9e9"></div>
<div class="a" style="left:568px;top:310px;width:451px;height:1px;background:#c8c8c8"></div>
<div class="a" style="left:568px;top:311px;width:451px;height:38px;background:#ffffff"></div>
<div class="a" style="left:568px;top:349px;width:451px;height:1px;background:#b6bfcb"></div>
<div class="a" style="left:568px;top:350px;width:451px;height:38px;background:#e9e9e9"></div>
<div class="a" style="left:568px;top:388px;width:451px;height:1px;background:#c8c8c8"></div>
<div class="a" style="left:568px;top:389px;width:451px;height:23px;background:#ffffff"></div>
<div class="a" style="left:568px;top:412px;width:451px;height:1px;background:#b6bfcb"></div>
<div class="a" style="left:568px;top:413px;width:451px;height:38px;background:#e9e9e9"></div>
<div class="a" style="left:568px;top:451px;width:451px;height:1px;background:#c8c8c8"></div>
<div class="a" style="left:568px;top:452px;width:451px;height:23px;background:#ffffff"></div>
<div class="a" style="left:568px;top:475px;width:451px;height:1px;background:#b6bfcb"></div>
<div class="a" style="left:568px;top:476px;width:451px;height:23px;background:#e9e9e9"></div>
<div class="a" style="left:568px;top:499px;width:451px;height:1px;background:#c8c8c8"></div>
<div class="a" style="left:568px;top:500px;width:451px;height:23px;background:#ffffff"></div>
<div class="a" style="left:568px;top:523px;width:451px;height:1px;background:#b6bfcb"></div>
<div class="a" style="left:568px;top:524px;width:451px;height:38px;background:#e9e9e9"></div>
<div class="a" style="left:568px;top:562px;width:451px;height:1px;background:#c8c8c8"></div>
<div class="a" style="left:568px;top:563px;width:451px;height:38px;background:#ffffff"></div>
<div class="a" style="left:568px;top:601px;width:451px;height:1px;background:#b6bfcb"></div>
<div class="a" style="left:568px;top:602px;width:451px;height:38px;background:#e9e9e9"></div>
<div class="a" style="left:568px;top:640px;width:451px;height:1px;background:#c8c8c8"></div>
<div class="a" style="left:626px;top:143px;width:56px;height:496px;background:#deecfb"></div>
<div class="a" style="left:822px;top:143px;width:56px;height:496px;background:#deecfb"></div>
<div class="a" style="left:654px;top:143px;width:1px;height:496px;background:#808080"></div>
<div class="a" style="left:850px;top:143px;width:1px;height:496px;background:#808080"></div>
<div class="a" style="left:568px;top:143px;width:451px;height:496px;overflow:hidden">
<div class="sbar" style="left:2px;top:6px;width:460px;height:6px"></div><svg class="a" style="left:2px;top:12px" width="6" height="4"><polygon points="0,0 6,0 0,4" fill="#444"/></svg>
<div class="sbar" style="left:2px;top:30px;width:168px;height:6px"></div><svg class="a" style="left:2px;top:36px" width="6" height="4"><polygon points="0,0 6,0 0,4" fill="#444"/></svg><svg class="a" style="left:164px;top:36px" width="6" height="4"><polygon points="0,0 6,0 6,4" fill="#444"/></svg>
<div class="bar" style="left:2px;top:54px;width:28px;height:10px"></div>
<div class="lbl" style="left:40px;top:57px">Project Manager</div>
<div class="bar" style="left:2px;top:78px;width:28px;height:10px"></div>
<div class="lbl" style="left:40px;top:81px">Project Manager</div>
<div class="bar" style="left:30px;top:102px;width:28px;height:10px"></div>
<div class="lbl" style="left:68px;top:105px">Project Manager</div>
<div class="bar" style="left:114px;top:126px;width:56px;height:10px"></div>
<div class="lbl" style="left:180px;top:129px">Project Manager</div>
<div class="sbar" style="left:170px;top:150px;width:160px;height:6px"><div class="dk" style="left:123px"></div></div><svg class="a" style="left:170px;top:156px" width="6" height="4"><polygon points="0,0 6,0 0,4" fill="#444"/></svg><svg class="a" style="left:324px;top:156px" width="6" height="4"><polygon points="0,0 6,0 6,4" fill="#444"/></svg>
<div class="bar" style="left:170px;top:181px;width:28px;height:10px"></div>
<div class="lbl" style="left:208px;top:184px">Project Manager; Marketer; Designer ; Programmer</div>
<div class="bar" style="left:170px;top:220px;width:160px;height:10px"><div class="dk" style="left:83px"></div></div>
<div class="lbl" style="left:340px;top:223px">Marketer</div>
<div class="bar" style="left:170px;top:252px;width:160px;height:10px"><div class="dk" style="left:83px"></div></div>
<div class="lbl" style="left:340px;top:255px">Marketer</div>
<div class="bar" style="left:170px;top:283px;width:160px;height:10px"><div class="dk" style="left:83px"></div></div>
<div class="lbl" style="left:340px;top:286px">Marketer</div>
<div class="bar" style="left:170px;top:315px;width:160px;height:10px"><div class="dk" style="left:83px"></div></div>
<div class="lbl" style="left:340px;top:318px">Marketer; Project Manager; Designer</div>
<div class="sbar" style="left:330px;top:339px;width:132px;height:6px"></div><svg class="a" style="left:330px;top:345px" width="6" height="4"><polygon points="0,0 6,0 0,4" fill="#444"/></svg>
<div class="sbar" style="left:330px;top:363px;width:56px;height:6px"><div class="dk" style="left:36px"></div></div><svg class="a" style="left:330px;top:369px" width="6" height="4"><polygon points="0,0 6,0 0,4" fill="#444"/></svg><svg class="a" style="left:380px;top:369px" width="6" height="4"><polygon points="0,0 6,0 6,4" fill="#444"/></svg>
<div class="bar" style="left:330px;top:394px;width:56px;height:10px"><div class="dk" style="left:36px"></div></div>
<div class="lbl" style="left:396px;top:398px">Project Manager</div>
<div class="bar" style="left:330px;top:433px;width:132px;height:10px"></div>
<div class="bar" style="left:330px;top:472px;width:28px;height:10px"></div>
<div class="lbl" style="left:368px;top:476px">Programmer</div>
<div class="ln" style="left:30px;top:59px;width:5px;height:1px"></div>
<div class="ln" style="left:34px;top:59px;width:1px;height:21px"></div>
<div class="ln" style="left:18px;top:79px;width:17px;height:1px"></div>
<div class="ln" style="left:18px;top:79px;width:1px;height:29px"></div>
<div class="ln" style="left:18px;top:107px;width:12px;height:1px"></div>
<svg class="a" style="left:25px;top:104.5px" width="5" height="6"><polygon points="0,0 5,3 0,6" fill="#3c3c3c"/></svg>
<div class="ln" style="left:58px;top:107px;width:25px;height:1px"></div>
<div class="ln" style="left:82px;top:107px;width:1px;height:25px"></div>
<div class="ln" style="left:82px;top:131px;width:32px;height:1px"></div>
<svg class="a" style="left:109px;top:128.5px" width="5" height="6"><polygon points="0,0 5,3 0,6" fill="#3c3c3c"/></svg>
<div class="ln" style="left:170px;top:35px;width:5px;height:1px"></div>
<div class="ln" style="left:174px;top:35px;width:1px;height:57px"></div>
<div class="ln" style="left:158px;top:91px;width:17px;height:1px"></div>
<div class="ln" style="left:158px;top:91px;width:1px;height:64px"></div>
<div class="ln" style="left:158px;top:154px;width:12px;height:1px"></div>
<svg class="a" style="left:165px;top:151.5px" width="5" height="6"><polygon points="0,0 5,3 0,6" fill="#3c3c3c"/></svg>
<div class="ln" style="left:158px;top:225px;width:13px;height:1px"></div>
<div class="ln" style="left:158px;top:225px;width:1px;height:96px"></div>
<div class="ln" style="left:158px;top:257px;width:12px;height:1px"></div>
<svg class="a" style="left:165px;top:254.5px" width="5" height="6"><polygon points="0,0 5,3 0,6" fill="#3c3c3c"/></svg>
<div class="ln" style="left:158px;top:288px;width:12px;height:1px"></div>
<svg class="a" style="left:165px;top:285.5px" width="5" height="6"><polygon points="0,0 5,3 0,6" fill="#3c3c3c"/></svg>
<div class="ln" style="left:158px;top:320px;width:12px;height:1px"></div>
<svg class="a" style="left:165px;top:317.5px" width="5" height="6"><polygon points="0,0 5,3 0,6" fill="#3c3c3c"/></svg>
<div class="ln" style="left:330px;top:155px;width:5px;height:1px"></div>
<div class="ln" style="left:334px;top:155px;width:1px;height:92px"></div>
<div class="ln" style="left:318px;top:246px;width:17px;height:1px"></div>
<div class="ln" style="left:318px;top:246px;width:1px;height:98px"></div>
<div class="ln" style="left:318px;top:343px;width:12px;height:1px"></div>
<svg class="a" style="left:325px;top:340.5px" width="5" height="6"><polygon points="0,0 5,3 0,6" fill="#3c3c3c"/></svg>
</div>
<div class="a" style="left:1019px;top:102px;width:16px;height:537px;background:#f6f6f6;border-left:1px solid #b8b8b8;border-right:1px solid #a0a0a0"></div>
<div class="a" style="left:1020px;top:102px;width:14px;height:506px;border-radius:0 0 7px 7px;background:linear-gradient(90deg,#c4c4c4 0%,#e8e8e8 30%,#fbfbfb 60%,#f2f2f2 100%);box-shadow:inset 0 -1px 1px rgba(0,0,0,0.15)"></div>
<div class="a" style="left:1020px;top:109px;width:13px;height:158px;border-radius:7px;box-shadow:0 0 0 0.7px #4a4a5a;background:linear-gradient(90deg,#1f3fd0 0%,#7aa6ea 15%,#a4c6f2 30%,#5a98ee 45%,#4a8eec 60%,#7abcf6 78%,#b0e6fd 90%,#6a90c0 100%)"></div>
<div class="a" style="left:1020px;top:622px;width:14px;height:1px;background:#d0d0d0"></div>
<svg class="a" style="left:1022px;top:609px" width="10" height="28"><polygon points="5,2 9,8 1,8" fill="#555"/><polygon points="1,17 9,17 5,23" fill="#555"/></svg>
<div class="a" style="left:40px;top:639px;width:523px;height:16px;background:#f6f6f6;border-top:1px solid #b8b8b8;border-bottom:1px solid #a8a8a8"></div>
<div class="a" style="left:40px;top:640px;width:492px;height:14px;border-radius:0 7px 7px 0;background:linear-gradient(#c4c4c4 0%,#e6e6e6 30%,#fbfbfb 60%,#f4f4f4 100%);box-shadow:inset -1px 0 1px rgba(0,0,0,0.15)"></div>
<div class="a" style="left:46px;top:640px;width:231px;height:13px;border-radius:7px;box-shadow:0 0 0 0.7px #4a4a5a;background:linear-gradient(#1f3fd0 0%,#6f9ee8 15%,#9cc2f2 30%,#5a98ee 45%,#3f86ea 60%,#78baf6 80%,#a8e0fc 92%,#5a80b8 100%)"></div>
<svg class="a" style="left:532px;top:640px" width="31" height="14"><polygon points="5,7 10,3.5 10,10.5" fill="#555"/><line x1="16" y1="1" x2="16" y2="13" stroke="#d0d0d0"/><polygon points="26,7 21,3.5 21,10.5" fill="#555"/></svg>
<div class="a" style="left:568px;top:639px;width:451px;height:16px;background:#f6f6f6;border-top:1px solid #b8b8b8;border-bottom:1px solid #a8a8a8"></div>
<div class="a" style="left:574px;top:640px;width:413px;height:14px;border-radius:7px;background:linear-gradient(#c4c4c4 0%,#e6e6e6 30%,#fbfbfb 60%,#f4f4f4 100%);box-shadow:inset 1px 0 1px rgba(0,0,0,0.15),inset -1px 0 1px rgba(0,0,0,0.15)"></div>
<div class="a" style="left:705px;top:640px;width:21px;height:13px;border-radius:7px;box-shadow:0 0 0 0.7px #4a4a5a;background:linear-gradient(#1f3fd0 0%,#6f9ee8 15%,#9cc2f2 30%,#5a98ee 45%,#3f86ea 60%,#78baf6 80%,#a8e0fc 92%,#5a80b8 100%)"></div>
<svg class="a" style="left:987px;top:640px" width="31" height="14"><polygon points="5,7 10,3.5 10,10.5" fill="#555"/><line x1="16" y1="1" x2="16" y2="13" stroke="#d0d0d0"/><polygon points="26,7 21,3.5 21,10.5" fill="#555"/></svg>
<div class="a" style="left:1019px;top:639px;width:16px;height:16px;background:#fff;border-top:1px solid #c8c8c8;border-bottom:1px solid #a8a8a8"></div>
<div class="a" style="left:40px;top:655px;width:995px;height:20px;background:#ececec"></div>
<div class="a" style="left:40px;top:655px;width:67px;height:20px;background:linear-gradient(#f8f8f8,#e4e4e4)"></div>
<div class="a" style="left:60px;top:655px;width:1px;height:20px;background:#a8a8a8"></div>
<div class="a" style="left:80px;top:655px;width:1px;height:20px;background:#a8a8a8"></div>
<div class="a" style="left:106px;top:655px;width:1px;height:20px;background:#a8a8a8"></div>
<svg class="a" style="left:46px;top:660px" width="10" height="10"><path d="M5,1 V9 M1,5 H9" stroke="#111" stroke-width="2"/></svg>
<div class="a" style="left:66px;top:664px;width:9px;height:2px;background:#8a8a8a"></div>
<svg class="a" style="left:84px;top:657px" width="20" height="14"><g transform="translate(6,7)" fill="#555"><circle r="3.6"/><g stroke="#555" stroke-width="1.8"><line x1="0" y1="-5.5" x2="0" y2="5.5"/><line x1="-5.5" y1="0" x2="5.5" y2="0"/><line x1="-3.9" y1="-3.9" x2="3.9" y2="3.9"/><line x1="-3.9" y1="3.9" x2="3.9" y2="-3.9"/></g><circle r="1.5" fill="#e8e8e8"/></g><polygon points="13,6 18,6 15.5,9" fill="#555"/></svg>
<div class="t ui" style="left:345px;top:660px;color:#111">Budget: 23,000.00 $</div>
<div class="t ui" style="left:572px;top:660px;color:#111">Actual Cost: 28,031.99 $</div>
<div class="t ui" style="left:791px;top:660px;color:#f41414">Profit: –5,031.99 $</div>
<svg class="a" style="left:1022px;top:662px" width="12" height="12"><g stroke="#777" stroke-width="1"><line x1="1" y1="11" x2="11" y2="1"/><line x1="5" y1="11" x2="11" y2="5"/><line x1="9" y1="11" x2="11" y2="9"/></g></svg>
</body></html>
